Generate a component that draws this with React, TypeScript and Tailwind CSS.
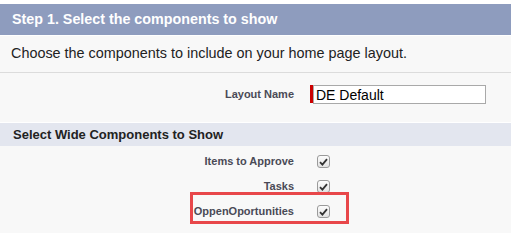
const font = { fontFamily: '"Liberation Sans", Arial, sans-serif' };

const rows = [
  { label: "Items to Approve", checked: true },
  { label: "Tasks", checked: true },
  { label: "OppenOportunities", checked: true, highlight: true },
];

function Check() {
  return (
    <span className="flex h-[13px] w-[13px] items-center justify-center rounded-[3px] border border-[#9a9a9a] bg-gradient-to-b from-[#fdfdfd] to-[#e2e2e2]">
      <svg width="9" height="8" viewBox="0 0 9 8">
        <path d="M1 4.2 L3.4 6.6 L8 1.2" fill="none" stroke="#333" strokeWidth="1.8" />
      </svg>
    </span>
  );
}

export default function App() {
  return (
    <div className="h-[233px] w-[511px] overflow-hidden bg-white pt-[4px]" style={font}>
      <div className="flex h-[31px] items-center bg-[#8e9cbe] pl-[12px] text-[14.3px] font-bold text-white">
        Step 1. Select the components to show
      </div>
      <div className="h-[198px] border-t border-white bg-[#f8f8f8]">
        <div className="flex h-[36px] items-center pl-[11px] text-[14.4px] text-[#222]">
          Choose the components to include on your home page layout.
        </div>
        <div className="h-[50px] border-t border-[#dcdcdc]">
          <div className="flex items-start pt-[12px]">
            <div className="w-[294px] pt-[1px] text-right text-[11px] font-bold text-[#4a4a56]">
              Layout Name
            </div>
            <div className="ml-[16px] flex">
              <span className="h-[18px] w-[3px] bg-[#c00]" />
              <input
                readOnly
                value="DE Default"
                className="h-[19px] w-[173px] border border-[#a9a9a9] bg-white px-[2px] text-[14px] leading-none text-black outline-none"
                style={font}
              />
            </div>
          </div>
        </div>
        <div className="flex h-[24px] items-center border-t border-white bg-[#e3e6ef] pl-[13px] text-[13px] font-bold text-[#222]">
          Select Wide Components to Show
        </div>
        <div className="flex flex-col pt-[7px]">
          {rows.map((r) => (
            <div key={r.label} className="relative flex h-[25px] items-start">
              <div className="w-[294px] text-right text-[11px] font-bold text-[#4a4a56]">{r.label}</div>
              <div className="ml-[23px] pt-[2px]">
                <Check />
              </div>
              {r.highlight && (
                <div className="absolute left-[190px] top-[-11px] h-[32px] w-[159px] border-[3px] border-[#e8474a]" />
              )}
            </div>
          ))}
        </div>
      </div>
    </div>
  );
}
